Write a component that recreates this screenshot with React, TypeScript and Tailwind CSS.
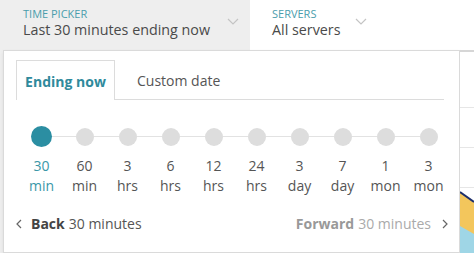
import React from "react";

const steps = [
  ["30", "min"],
  ["60", "min"],
  ["3", "hrs"],
  ["6", "hrs"],
  ["12", "hrs"],
  ["24", "hrs"],
  ["3", "day"],
  ["7", "day"],
  ["1", "mon"],
  ["3", "mon"],
];

const Chevron = ({ dir }: { dir: "down" | "left" | "right" }) => {
  if (dir === "down")
    return (
      <svg width="12" height="7" viewBox="0 0 12 7" fill="none">
        <path d="M1 1l5 5 5-5" stroke="#c4c4c4" strokeWidth="1.2" />
      </svg>
    );
  return (
    <svg width="6" height="10" viewBox="0 0 6 10" fill="none">
      <path
        d={dir === "left" ? "M5 1L1 5l4 4" : "M1 1l4 4-4 4"}
        stroke="#666"
        strokeWidth="1.2"
      />
    </svg>
  );
};

const App = () => {
  return (
    <div className="w-[474px] h-[253px] overflow-hidden bg-[#efefef] font-['Open_Sans',sans-serif] flex flex-col">
      {/* header */}
      <div className="flex h-[50px] shrink-0">
        <div className="w-[250px] bg-[#eeeeee] pl-[23px] pr-[11px] pt-[7px] flex items-start justify-between">
          <div className="flex flex-col">
            <span className="text-[11px] leading-[13px] text-[#4a9dac] uppercase">Time picker</span>
            <span className="text-[14.3px] leading-[19px] text-[#4a4a4a]">Last 30 minutes ending now</span>
          </div>
          <div className="mt-[11px]">
            <Chevron dir="down" />
          </div>
        </div>
        <div className="flex-1 bg-white pl-[22px] pt-[7px] flex items-start">
          <div className="flex flex-col">
            <span className="text-[11px] leading-[13px] text-[#4a9dac] uppercase">Servers</span>
            <span className="text-[14.3px] leading-[19px] text-[#4a4a4a]">All servers</span>
          </div>
          <div className="ml-[15px] mt-[11px]">
            <Chevron dir="down" />
          </div>
        </div>
      </div>

      {/* body */}
      <div className="flex flex-1">
        <div className="w-[3px] shrink-0" />
        <div className="w-[457px] shrink-0 bg-white border border-[#dadada] shadow-[0_2px_4px_rgba(0,0,0,0.08)] pt-[9px]">
          {/* tabs */}
          <div className="flex ml-[12px] w-[428px] border-b border-[#dcdcdc] h-[40px]">
            <div className="w-[99px] border border-b-0 border-[#dcdcdc] bg-white -mb-px flex items-center justify-center text-[14px] font-bold text-[#2f8a9c] pt-px">
              Ending now
            </div>
            <div className="pl-[22px] pt-px flex items-center text-[14px] text-[#555]">Custom date</div>
          </div>

          {/* slider */}
          <div className="relative ml-[16px] w-[430px] mt-[26px]">
            <div className="absolute left-[21px] right-[21px] top-[10px] h-px bg-[#e2e2e2]" />
            <div className="grid grid-cols-10 relative">
              {steps.map(([n, u], i) => (
                <div key={i} className="flex flex-col items-center">
                  <div className="h-[21px] flex items-center">
                    {i === 0 ? (
                      <div className="w-[21px] h-[21px] rounded-full bg-[#2b8ea2]" />
                    ) : (
                      <div className="w-[18px] h-[18px] rounded-full bg-[#dddddd]" />
                    )}
                  </div>
                  <div
                    className={`mt-[9px] text-[14px] leading-[20px] text-center ${
                      i === 0 ? "text-[#3a97a8]" : "text-[#555]"
                    }`}
                  >
                    <div>{n}</div>
                    <div>{u}</div>
                  </div>
                </div>
              ))}
            </div>
          </div>

          {/* back / forward */}
          <div className="flex items-center justify-between ml-[12px] w-[432px] mt-[17px] text-[14px]">
            <div className="flex items-center">
              <Chevron dir="left" />
              <span className="ml-[9px] font-bold text-[#444]">Back</span>
              <span className="ml-[4px] text-[#555]">30 minutes</span>
            </div>
            <div className="flex items-center">
              <span className="font-bold text-[#999]">Forward</span>
              <span className="ml-[4px] text-[#aaa]">30 minutes</span>
              <span className="ml-[11px]">
                <Chevron dir="right" />
              </span>
            </div>
          </div>
        </div>

        {/* chart behind */}
        <div className="flex-1 bg-white relative border-t-2 border-[#d6d6d6]">
          <div className="h-[56px] border-b border-[#e6e6e6]" />
          <div className="h-[40px] border-b border-[#e6e6e6]" />
          <div className="h-[40px] border-b border-[#e6e6e6]" />
          <svg className="absolute left-0 top-[138px]" width="14" height="70" viewBox="0 0 14 70">
            <path d="M0 2 L14 12 L14 70 L0 70 Z" fill="#f3c65c" />
            <path d="M0 36 L14 44 L14 70 L0 70 Z" fill="#9fd6e6" />
            <path d="M0 2 L14 12" stroke="#1d2f6b" strokeWidth="2" fill="none" />
          </svg>
        </div>
      </div>
    </div>
  );
};

export default App;
